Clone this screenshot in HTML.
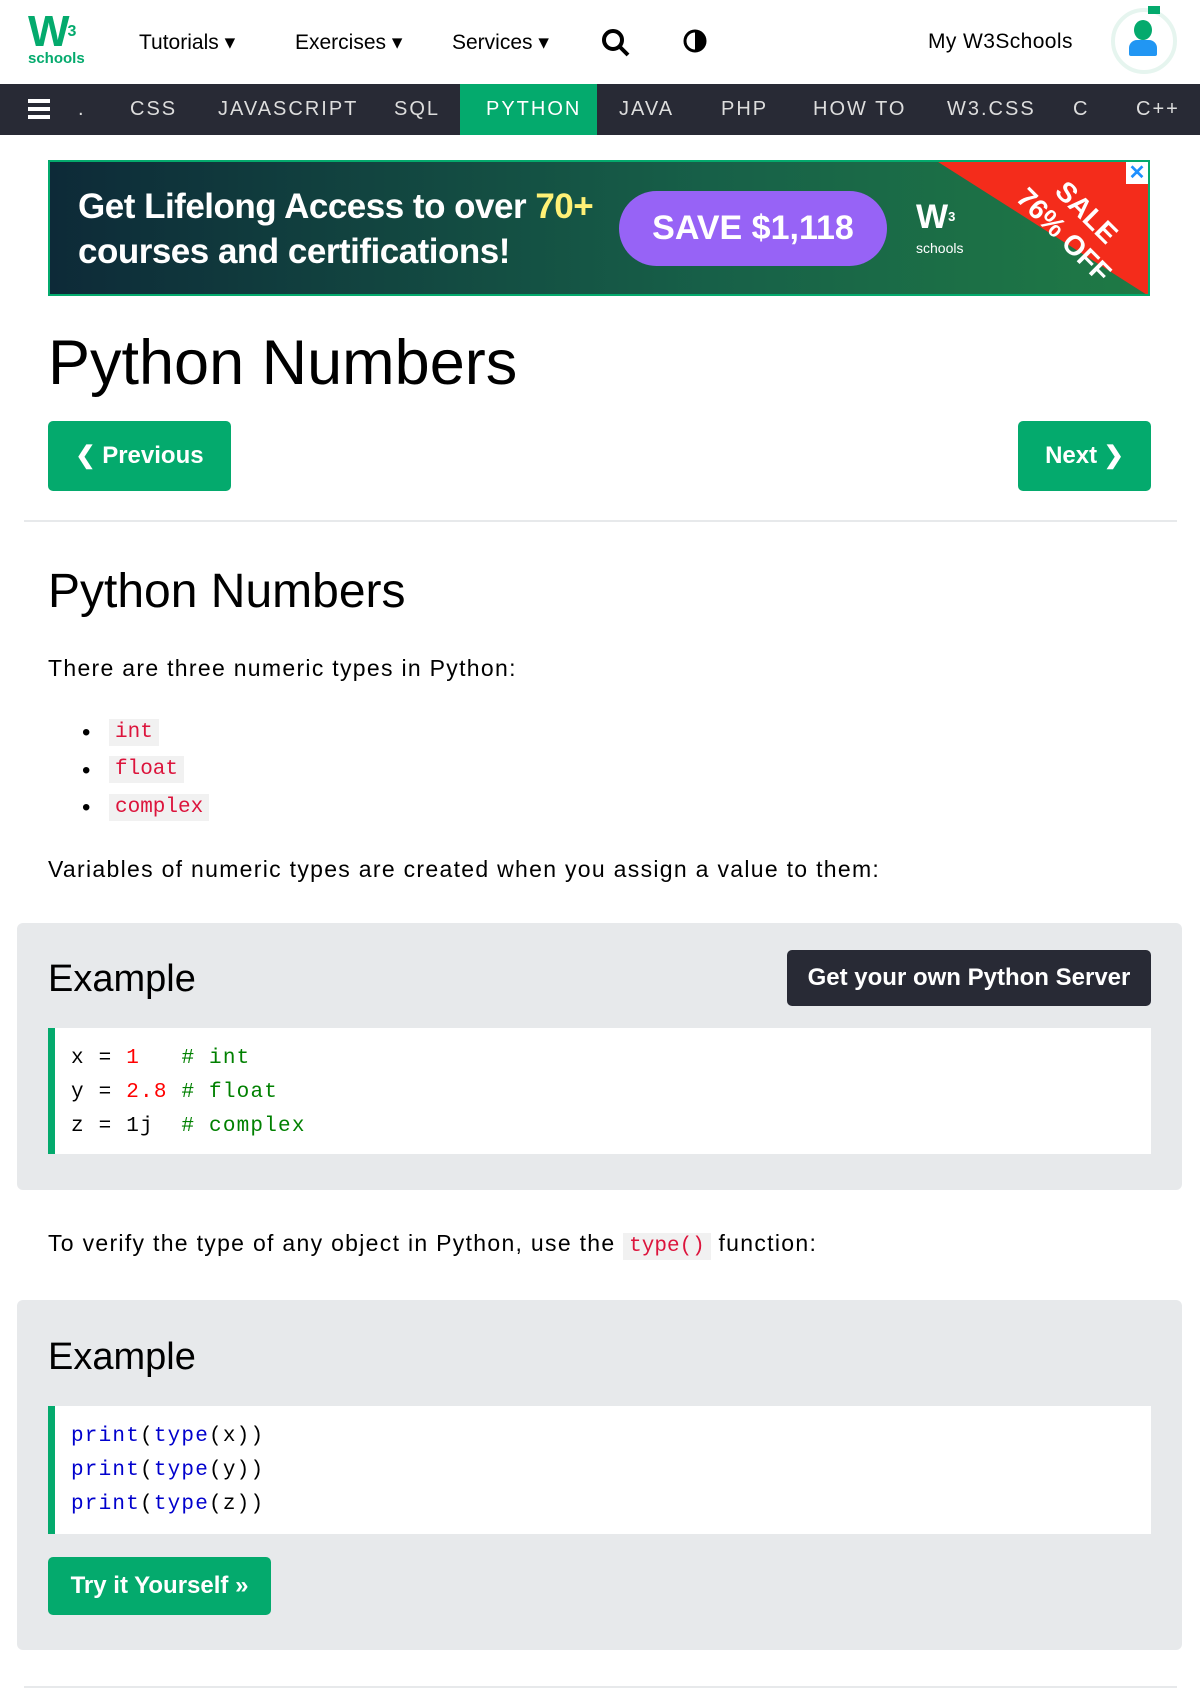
<!DOCTYPE html>
<html><head><meta charset="utf-8"><style>
*{margin:0;padding:0;box-sizing:border-box}
body{width:1200px;height:1698px;overflow:hidden;background:#fff;font-family:"Liberation Sans",sans-serif;color:#000;position:relative}
.a{position:absolute;white-space:nowrap}
.top{font-size:21px;color:#000;top:30px}
.nav{position:absolute;top:84px;left:0;width:1200px;height:51px;background:#282a35}
.nav span{position:absolute;top:14px;color:#ddd;font-size:20px;letter-spacing:2px}
.code{font-family:"Liberation Mono",monospace;color:#dc143c;background:#f1f1f1;padding:2px 6px;font-size:21px}
.p{font-size:23px;letter-spacing:1.3px}
.ex{position:absolute;left:17px;width:1165px;background:#e7e9eb;border-radius:6px}
.cb{position:absolute;left:31px;width:1103px;background:#fff;border-left:7px solid #04aa6d;font-family:"Liberation Mono",monospace;font-size:21px;letter-spacing:1.2px;line-height:34px;padding:14px 16px;white-space:pre}
.btn{position:absolute;background:#04aa6d;color:#fff;border-radius:5px;font-weight:bold;font-size:24px;text-align:center}
</style></head><body>
<div class="a" style="left:28px;top:10px;color:#04aa6d;font-weight:bold;font-size:44px;line-height:44px;letter-spacing:-2px">W<sup style="font-size:16px;vertical-align:top">3</sup></div>
<div class="a" style="left:28px;top:50px;color:#04aa6d;font-size:15px;font-weight:bold">schools</div>
<div class="a top" style="left:139px">Tutorials ▾</div>
<div class="a top" style="left:295px">Exercises ▾</div>
<div class="a top" style="left:452px">Services ▾</div>
<svg class="a" style="left:601px;top:28px" width="30" height="30" viewBox="0 0 30 30"><circle cx="12" cy="12" r="9" fill="none" stroke="#000" stroke-width="4"/><line x1="18" y1="18" x2="27" y2="27" stroke="#000" stroke-width="4"/></svg>
<svg class="a" style="left:683px;top:29px" width="24" height="24" viewBox="0 0 24 24"><circle cx="12" cy="12" r="10" fill="#fff" stroke="#000" stroke-width="3"/><path d="M12 2a10 10 0 0 1 0 20z" fill="#000"/></svg>
<div class="a top" style="left:928px;letter-spacing:0.4px">My W3Schools</div>
<div class="a" style="left:1111px;top:8px;width:66px;height:66px;border-radius:50%;border:4px solid #e6f5ef"></div>
<div class="a" style="left:1134px;top:20px;width:18px;height:20px;border-radius:50%;background:#04aa6d"></div>
<div class="a" style="left:1129px;top:40px;width:28px;height:16px;border-radius:8px 8px 2px 2px;background:#2196f3"></div>
<div class="a" style="left:1148px;top:6px;width:12px;height:8px;background:#04aa6d"></div>
<div class="nav">
<div style="position:absolute;left:28px;top:15px;width:22px;height:4px;background:#fff;box-shadow:0 8px 0 #fff,0 16px 0 #fff"></div>
<span style="left:78px">.</span>
<span style="left:130px">CSS</span>
<span style="left:218px">JAVASCRIPT</span>
<span style="left:394px">SQL</span>
<div style="position:absolute;left:460px;top:0;width:137px;height:51px;background:#04aa6d"></div>
<span style="left:486px;color:#fff">PYTHON</span>
<span style="left:619px">JAVA</span>
<span style="left:721px">PHP</span>
<span style="left:813px">HOW TO</span>
<span style="left:947px">W3.CSS</span>
<span style="left:1073px">C</span>
<span style="left:1136px">C++</span>
</div>
<div class="a" style="left:48px;top:160px;width:1102px;height:136px;border:2px solid #04aa6d;background:linear-gradient(90deg,#0d2a38,#176048 60%,#1f7a45);overflow:hidden">
<div class="a" style="left:28px;top:22px;color:#fff;font-weight:bold;font-size:35px;line-height:45px;letter-spacing:-0.5px">Get Lifelong Access to over <span style="color:#fff176">70+</span><br>courses and certifications!</div>
<div class="a" style="left:569px;top:29px;width:268px;height:75px;border-radius:38px;background:#9763f6;color:#fff;font-weight:bold;font-size:34px;line-height:75px;text-align:center">SAVE $1,118</div>
<div class="a" style="left:866px;top:38px;color:#fff;font-weight:bold;font-size:34px;line-height:34px">W<sup style="font-size:13px;vertical-align:top">3</sup></div>
<div class="a" style="left:866px;top:78px;color:#fff;font-size:14px">schools</div>
<div class="a" style="left:885px;top:-2px;width:0;height:0;border-top:140px solid #f42c1b;border-left:220px solid transparent"></div>
<div class="a" style="left:965px;top:30px;color:#fff;font-weight:bold;font-size:28px;line-height:32px;transform:rotate(45deg);text-align:center">SALE<br>76% OFF</div>
<div class="a" style="right:0;top:0;width:22px;height:22px;background:#fff;color:#1e90ff;font-weight:bold;font-size:20px;line-height:22px;text-align:center">✕</div>
</div>
<div class="a" style="left:48px;top:325px;font-size:63px;line-height:76px">Python Numbers</div>
<div class="btn" style="left:48px;top:421px;width:183px;height:70px;line-height:70px">❮ Previous</div>
<div class="btn" style="left:1018px;top:421px;width:133px;height:70px;line-height:70px">Next ❯</div>
<div class="a" style="left:24px;top:520px;width:1153px;height:2px;background:#e7e9eb"></div>
<div class="a" style="left:48px;top:562px;font-size:48px;line-height:60px">Python Numbers</div>
<div class="a p" style="left:48px;top:655px">There are three numeric types in Python:</div>
<div class="a" style="left:82px;top:714px;font-size:24px;line-height:37.5px">•<br>•<br>•</div>
<div class="a" style="left:109px;top:721px"><span class="code">int</span></div>
<div class="a" style="left:109px;top:758px"><span class="code">float</span></div>
<div class="a" style="left:109px;top:796px"><span class="code">complex</span></div>
<div class="a p" style="left:48px;top:856px">Variables of numeric types are created when you assign a value to them:</div>
<div class="ex" style="top:923px;height:267px">
<div class="a" style="left:31px;top:35px;font-size:38px">Example</div>
<div class="a" style="left:770px;top:27px;width:364px;height:56px;background:#282a35;border-radius:5px;color:#fff;font-weight:bold;font-size:24px;line-height:56px;text-align:center">Get your own Python Server</div>
<div class="cb" style="top:105px;height:126px">x = <span style="color:red">1</span>   <span style="color:green"># int</span>
y = <span style="color:red">2.8</span> <span style="color:green"># float</span>
z = 1j  <span style="color:green"># complex</span></div>
</div>
<div class="a p" style="left:48px;top:1230px">To verify the type of any object in Python, use the <span class="code" style="letter-spacing:0">type()</span> function:</div>
<div class="ex" style="top:1300px;height:350px">
<div class="a" style="left:31px;top:36px;font-size:38px">Example</div>
<div class="cb" style="top:106px;height:128px;color:#000"><span style="color:mediumblue">print</span>(<span style="color:mediumblue">type</span>(x))
<span style="color:mediumblue">print</span>(<span style="color:mediumblue">type</span>(y))
<span style="color:mediumblue">print</span>(<span style="color:mediumblue">type</span>(z))</div>
<div class="btn" style="left:31px;top:257px;width:223px;height:58px;line-height:58px">Try it Yourself »</div>
</div>
<div class="a" style="left:24px;top:1686px;width:1153px;height:2px;background:#e7e9eb"></div>
</body></html>
